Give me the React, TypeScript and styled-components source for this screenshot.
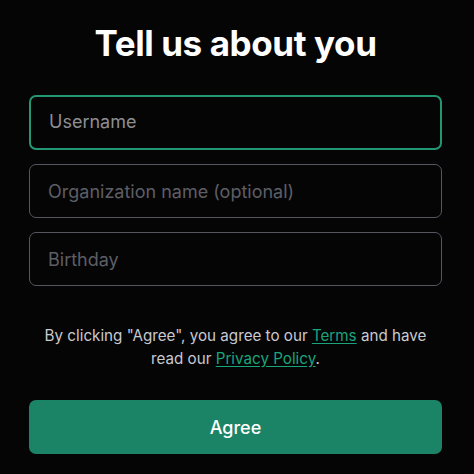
import styled, { createGlobalStyle } from "styled-components";

const GlobalStyle = createGlobalStyle`
  html, body {
    margin: 0;
    padding: 0;
    background: #050505;
  }
  body {
    font-family: Inter, "Liberation Sans", sans-serif;
  }
`;

const Page = styled.main`
  width: 474px;
  height: 474px;
  box-sizing: border-box;
  padding: 21px 32px 0 29px;
  display: flex;
  flex-direction: column;
  align-items: stretch;
`;

const Title = styled.h1`
  margin: 0 0 29px;
  text-align: center;
  color: #ffffff;
  font-size: 35px;
  font-weight: 700;
  letter-spacing: -0.4px;
  line-height: 45px;
`;

const Fields = styled.div`
  display: flex;
  flex-direction: column;
  gap: 14px;
`;

const Field = styled.input<{ $focused?: boolean }>`
  box-sizing: border-box;
  height: ${(p) => (p.$focused ? "55px" : "54px")};
  width: 100%;
  margin: 0;
  padding: ${(p) => (p.$focused ? "0 18px 3px" : "0 18px")};
  background: transparent;
  border: ${(p) => (p.$focused ? "2px solid #239774" : "1px solid #55565f")};
  border-radius: 7px;
  color: #ececf1;
  font-family: Inter, "Liberation Sans", sans-serif;
  font-size: 18px;
  outline: none;

  &::placeholder {
    color: ${(p) => (p.$focused ? "#8e8e94" : "#5d5e66")};
  }
`;

const Notice = styled.p`
  margin: 38px 0 0;
  text-align: center;
  color: #c9c9d0;
  font-size: 15.2px;
  line-height: 23px;
`;

const Link = styled.a`
  color: #19a47c;
  text-decoration: underline;
  text-underline-offset: 2px;
`;

const AgreeButton = styled.button`
  margin-top: 30px;
  height: 54px;
  width: 100%;
  border: none;
  border-radius: 7px;
  background: #1b8366;
  color: #ffffff;
  font-family: Inter, "Liberation Sans", sans-serif;
  font-size: 18px;
  font-weight: 500;
  cursor: pointer;
`;

export default function App() {
  return (
    <>
      <GlobalStyle />
      <Page>
        <Title>Tell us about you</Title>
        <Fields>
          <Field $focused placeholder="Username" />
          <Field placeholder="Organization name (optional)" />
          <Field placeholder="Birthday" />
        </Fields>
        <Notice>
          By clicking "Agree", you agree to our <Link href="#">Terms</Link> and have
          <br />
          read our <Link href="#">Privacy Policy</Link>.
        </Notice>
        <AgreeButton>Agree</AgreeButton>
      </Page>
    </>
  );
}
